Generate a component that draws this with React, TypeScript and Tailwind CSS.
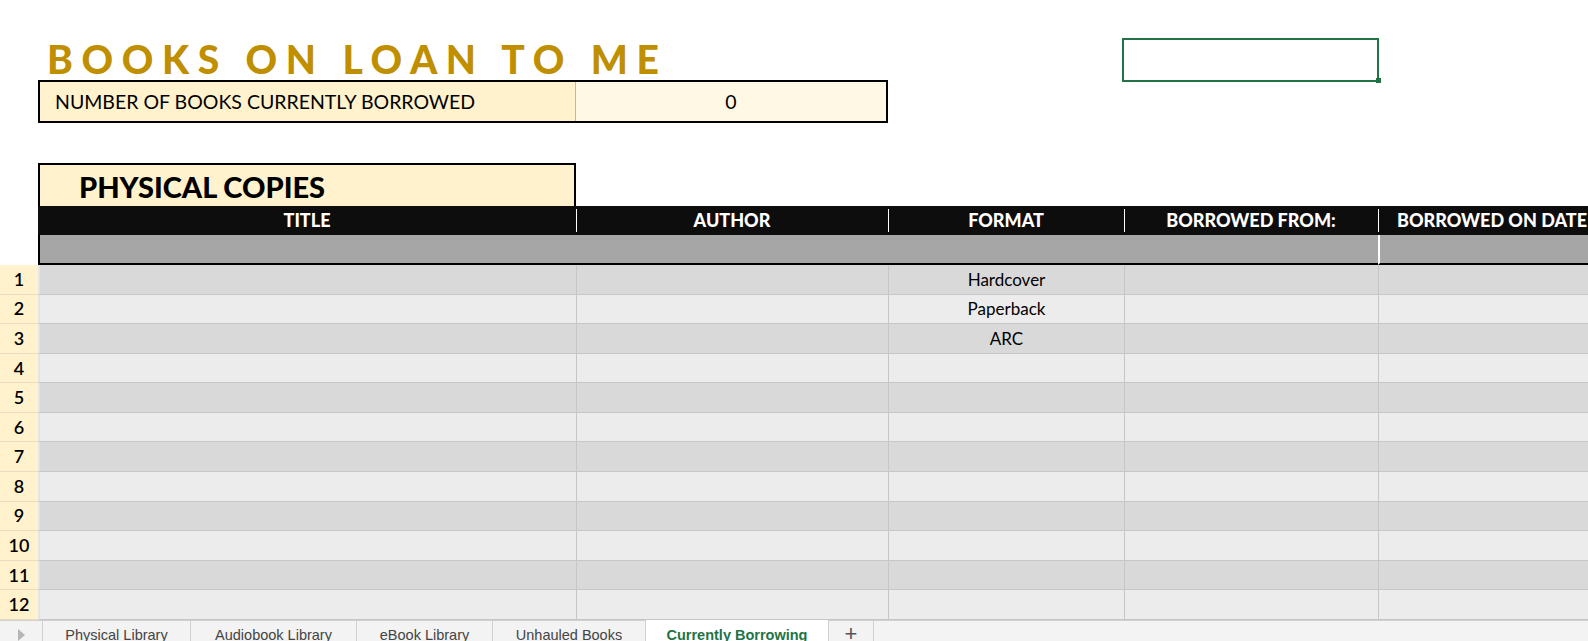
import React from "react";

const COLS = "grid grid-cols-[38px_538px_312px_236px_254px_1fr]";
const FUT = { fontFamily: "Lato, 'Liberation Sans', sans-serif" };

const rows = [
  { n: 1, f: "Hardcover" },
  { n: 2, f: "Paperback" },
  { n: 3, f: "ARC" },
  { n: 4, f: "" },
  { n: 5, f: "" },
  { n: 6, f: "" },
  { n: 7, f: "" },
  { n: 8, f: "" },
  { n: 9, f: "" },
  { n: 10, f: "" },
  { n: 11, f: "" },
  { n: 12, f: "" },
];

const tabs = ["Physical Library", "Audiobook Library", "eBook Library", "Unhauled Books"];
const tabW = ["w-[148px]", "w-[166px]", "w-[136px]", "w-[153px]"];

export default function App() {
  return (
    <div className="w-[1588px] h-[641px] overflow-hidden bg-white flex flex-col" style={FUT}>
      {/* blank row */}
      <div className="h-[38px] shrink-0" />
      {/* title row */}
      <div className={`${COLS} h-[42px] shrink-0`}>
        <div />
        <div className="col-span-3 relative">
          <div className="absolute left-[9px] top-[1px] text-[39px] leading-[40px] font-black tracking-[8.6px] text-[#bf8f00] whitespace-nowrap">
            BOOKS ON LOAN TO ME
          </div>
        </div>
        <div className="relative">
          <div className="absolute left-[-2px] top-0 w-[257px] h-[44px] border-2 border-[#217346]" />
          <div className="absolute left-[252px] top-[40px] w-[5px] h-[5px] bg-[#217346]" />
        </div>
        <div />
      </div>
      {/* summary row */}
      <div className={`${COLS} h-[43px] shrink-0`}>
        <div />
        <div className="col-span-2 flex border-2 border-black">
          <div className="w-[536px] bg-[#fff2cc] border-r border-[#b8b8b8] flex items-center pl-[15px] text-[19.5px] text-black whitespace-nowrap">
            NUMBER OF BOOKS CURRENTLY BORROWED
          </div>
          <div className="flex-1 bg-[#fff8e5] flex items-center justify-center text-[19.5px] text-black">0</div>
        </div>
      </div>
      <div className="h-[40px] shrink-0" />
      {/* physical copies */}
      <div className={`${COLS} h-[43px] shrink-0`}>
        <div />
        <div className="bg-[#fff2cc] border-2 border-b-0 border-black flex items-center pl-[39px] pb-[2px] text-[29px] font-black text-black whitespace-nowrap">
          PHYSICAL COPIES
        </div>
      </div>
      {/* header */}
      <div className={`${COLS} h-[29px] shrink-0`}>
        <div />
        {["TITLE", "AUTHOR", "FORMAT", "BORROWED FROM:"].map((h, i) => (
          <div key={h} className="bg-[#0d0d0d] flex items-center justify-center relative text-white font-black text-[18px] whitespace-nowrap">
            {i > 0 && <div className="absolute left-0 top-[3px] bottom-[3px] w-px bg-white" />}
            {h}
          </div>
        ))}
        <div className="bg-[#0d0d0d] flex items-center relative text-white font-black text-[18px] pl-[19px] whitespace-nowrap overflow-hidden">
          <div className="absolute left-0 top-[3px] bottom-[3px] w-px bg-white" />
          BORROWED ON DATE
        </div>
      </div>
      {/* gray row */}
      <div className={`${COLS} h-[30px] shrink-0`}>
        <div />
        <div className="col-span-4 bg-[#a6a6a6] border-l-2 border-b-2 border-black" />
        <div className="bg-[#a6a6a6] border-b-2 border-black border-l-2 border-l-white" />
      </div>
      {/* data rows */}
      {rows.map((r) => {
        const bg = r.n % 2 === 1 ? "bg-[#d9d9d9]" : "bg-[#ececec]";
        return (
          <div key={r.n} className={`${COLS} h-[29.58px] shrink-0`}>
            <div className="bg-[#fff2cc] border-b border-[#e6dcc0] flex items-center justify-center text-[18px] font-semibold text-black">
              {r.n}
            </div>
            <div className={`${bg} border-b border-[#c6c6c6] border-l-2 border-l-[#e4e4e4]`} />
            <div className={`${bg} border-b border-[#c6c6c6] border-l border-l-[#c6c6c6]`} />
            <div className={`${bg} border-b border-[#c6c6c6] border-l border-l-[#c6c6c6] flex items-center justify-center text-[17px] text-black`}>
              {r.f}
            </div>
            <div className={`${bg} border-b border-[#c6c6c6] border-l border-l-[#c6c6c6]`} />
            <div className={`${bg} border-b border-[#c6c6c6] border-l border-l-[#c6c6c6]`} />
          </div>
        );
      })}
      {/* tab bar */}
      <div className="flex-1 bg-[#f3f3f3] border-t border-[#d0d0d0] flex text-[14.5px] leading-[17px] text-[#444]" style={{ fontFamily: "'Liberation Sans', Arial, sans-serif" }}>
        <div className="w-[42px] flex justify-center pt-[7px]">
          <svg width="10" height="14" viewBox="0 0 10 14"><path d="M2 1 L9 7 L2 13 Z" fill="#b5b5b5" /></svg>
        </div>
        {tabs.map((t, i) => (
          <div key={t} className={`${tabW[i]} border-l border-[#d0d0d0] flex justify-center pt-[6px] whitespace-nowrap`}>
            {t}
          </div>
        ))}
        <div className="w-[183px] -mt-px bg-white border-l border-[#d0d0d0] flex justify-center pt-[7px] font-bold text-[#217346] whitespace-nowrap">
          Currently Borrowing
        </div>
        <div className="w-[46px] border-l border-r border-[#d0d0d0] flex justify-center pt-[4px] text-[22px] text-[#555] font-light">
          +
        </div>
      </div>
    </div>
  );
}
